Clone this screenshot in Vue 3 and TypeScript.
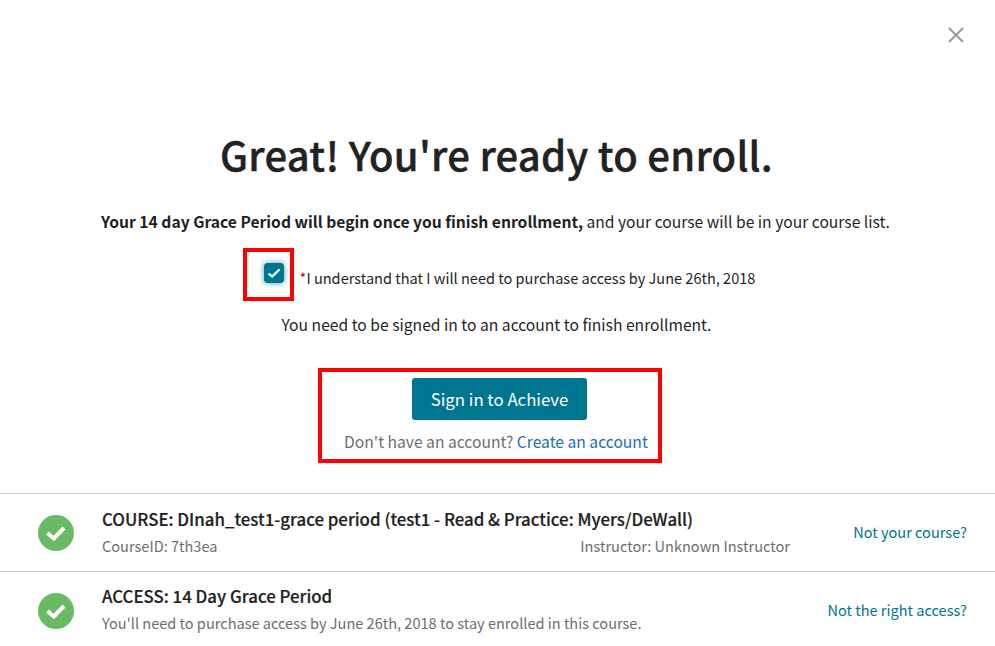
<script setup lang="ts">
const rows = [
  { title: 'COURSE: DInah_test1-grace period (test1 - Read & Practice: Myers/DeWall)', sub: 'CourseID: 7th3ea', instructor: 'Instructor: Unknown Instructor', link: 'Not your course?' },
  { title: 'ACCESS: 14 Day Grace Period', sub: "You'll need to purchase access by June 26th, 2018 to stay enrolled in this course.", instructor: '', link: 'Not the right access?' },
]
</script>

<template>
  <div class="page">
    <button class="close" aria-label="Close">
      <svg width="18" height="18" viewBox="0 0 18 18"><path d="M2 2 L16 16 M16 2 L2 16" stroke="#9a9a9a" stroke-width="1.9" fill="none" /></svg>
    </button>
    <main class="main">
      <h1 class="title">Great! You're ready to enroll.</h1>
      <p class="lead"><strong>Your 14 day Grace Period will begin once you finish enrollment,</strong> and your course will be in your course list.</p>
      <div class="agree">
        <span class="check">
          <svg width="14" height="12" viewBox="0 0 14 12"><path d="M1.5 6.5 L5.2 9.6 L12.5 2.4" stroke="#fff" stroke-width="2.2" fill="none" /></svg>
        </span>
        <span class="agree-text"><span class="star">*</span>I understand that I will need to purchase access by June 26th, 2018</span>
      </div>
      <p class="signed">You need to be signed in to an account to finish enrollment.</p>
      <div class="actions">
        <button class="primary">Sign in to Achieve</button>
        <p class="create">Don't have an account? <a href="#" class="link">Create an account</a></p>
      </div>
    </main>
    <section class="rows">
      <div v-for="r in rows" :key="r.title" class="row">
        <svg class="ok" width="36" height="36" viewBox="0 0 36 36"><circle cx="18" cy="18" r="18" fill="#6aba65" /><path d="M9.5 18 L15.8 23.5 L26 13" stroke="#fff" stroke-width="4" fill="none" /></svg>
        <div class="info">
          <div class="row-title">{{ r.title }}</div>
          <div class="row-sub"><span>{{ r.sub }}</span><span v-if="r.instructor">{{ r.instructor }}</span></div>
        </div>
        <a href="#" class="row-link">{{ r.link }}</a>
      </div>
    </section>
  </div>
</template>

<style scoped>
.page { position: relative; width: 995px; height: 646px; overflow: hidden; background: #fff; color: #1f1f1f; font-family: "Noto Sans CJK SC", "Noto Sans", sans-serif; }
.close { position: absolute; left: 947px; top: 25.5px; width: 18px; height: 18px; padding: 0; border: 0; background: none; display: block; }
.close svg { display: block; }
.main { height: 493px; display: flex; flex-direction: column; align-items: center; }
.title { margin: 127px 2px 0 0; font-size: 40px; line-height: 54px; font-weight: 500; color: #222; letter-spacing: .25px; -webkit-text-stroke: .4px #222; }
.lead { margin: 28px 4px 0 0; font-size: 15.65px; line-height: 26px; }
.lead strong { font-weight: 700; }
.agree { position: relative; margin: 19px 0 0 24px; display: flex; align-items: flex-start; height: 38px; white-space: nowrap; }
.agree::before { content: ""; position: absolute; left: -21px; top: -6px; width: 43px; height: 45px; border: 4px solid #f00; }
.check { position: relative; width: 20px; height: 20px; margin-top: 9px; border-radius: 4px; background: #00758f; box-shadow: 0 0 5px 1px rgba(0, 117, 143, .55); display: flex; align-items: center; justify-content: center; margin-right: 16px; }
.agree-text { margin-top: 14px; font-size: 14.55px; line-height: 20px; }
.star { color: #d0021b; }
.signed { margin: 20px 2px 0 0; font-size: 15.65px; line-height: 26px; }
.actions { margin: 30px 15px 0 0; box-sizing: border-box; width: 344px; height: 95px; border: 4px solid #f00; display: flex; flex-direction: column; align-items: flex-start; padding-top: 6px; }
.primary { margin-left: 90px; width: 175px; height: 42px; border: 0; border-radius: 3px; background: #00758f; color: #fff; font: 16.8px/42px "Noto Sans CJK SC", "Noto Sans", sans-serif; padding: 0; }
.create { margin: 10px 0 0 22px; font-size: 15.65px; line-height: 24px; color: #6d6e71; white-space: nowrap; }
.link { color: #1c6cb5; text-decoration: none; }
.rows { border-top: 1px solid #c8c8c8; }
.row { height: 77px; box-sizing: border-box; display: flex; align-items: center; padding: 0 28px 0 38px; }
.row + .row { height: 78px; border-top: 1px solid #c8c8c8; }
.ok { flex: none; }
.info { flex: none; width: 688px; margin-left: 28px; padding-bottom: 3px; }
.row + .row .info { padding-bottom: 5px; }
.row-title { font-size: 16.85px; line-height: 24px; font-weight: 500; color: #1f1f1f; -webkit-text-stroke: .2px #1f1f1f; }
.row-sub { margin-top: 5px; display: flex; justify-content: space-between; font-size: 14.55px; line-height: 20px; color: #6d6e71; }
.row + .row .row-sub { margin-top: 5px; }
.row-link { margin-left: auto; padding-bottom: 2px; color: #00758f; font-size: 14.55px; line-height: 20px; text-decoration: none; }
</style>
